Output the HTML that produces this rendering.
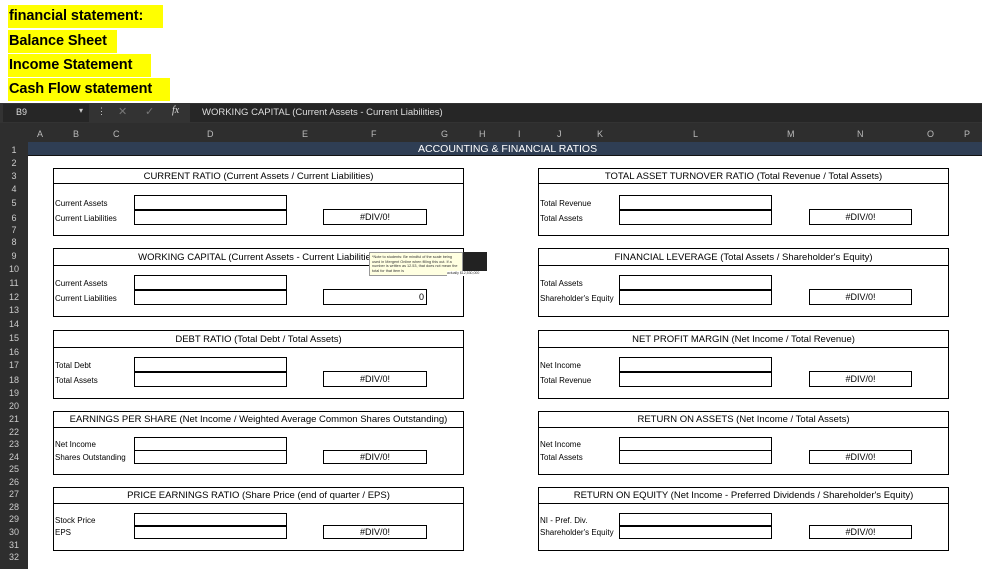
<!DOCTYPE html>
<html><head><meta charset="utf-8"><style>
*{margin:0;padding:0;box-sizing:border-box}
body{width:982px;height:569px;background:#fff;position:relative;overflow:hidden;font-family:"Liberation Sans",sans-serif}
.a{position:absolute}
.y{position:absolute;left:8px;background:#ffff00;font-weight:bold;font-size:14.5px;color:#000;line-height:23px;padding-left:1px;white-space:nowrap;letter-spacing:-0.1px}
.rn{position:absolute;left:0;width:28px;text-align:center;font-size:9px;color:#ccc;line-height:10px}
.ch{position:absolute;top:129px;font-size:9px;color:#bbb}
.box{position:absolute;border:1.5px solid #000;background:#fff}
.t{position:absolute;left:0;right:0;text-align:center;font-size:9.5px;color:#000;white-space:nowrap}
.hl{position:absolute;left:0;right:0;border-top:1px solid #000}
.lb{position:absolute;font-size:8px;color:#000;white-space:nowrap}
.in{position:absolute;border:1.5px solid #000}
.res{position:absolute;border:1.5px solid #000;font-size:9px;text-align:center;color:#000}
</style></head><body>
<div class="y" style="top:5px;width:155px">financial statement:</div>
<div class="y" style="top:30px;width:109px">Balance Sheet</div>
<div class="y" style="top:54px;width:143px">Income Statement</div>
<div class="y" style="top:78px;width:162px">Cash Flow statement</div>

<div class="a" style="top:103px;left:0;width:982px;height:20px;background:#333"></div>
<div class="a" style="top:104px;left:3px;width:86px;height:18px;background:#262626"></div>
<div class="a" style="top:107px;left:16px;font-size:9px;color:#ddd">B9</div>
<div class="a" style="top:106px;left:79px;font-size:8px;color:#ccc">▾</div>
<div class="a" style="top:106px;left:97px;font-size:9px;color:#ccc">⋮</div>
<div class="a" style="top:105px;left:118px;font-size:11px;color:#777">✕</div>
<div class="a" style="top:105px;left:145px;font-size:11px;color:#777">✓</div>
<div class="a" style="top:105px;left:172px;font-size:10px;color:#ddd;font-style:italic;font-family:'Liberation Serif',serif">fx</div>
<div class="a" style="top:104px;left:190px;width:792px;height:18px;background:#262626"></div>
<div class="a" style="top:107px;left:202px;font-size:9.5px;color:#ddd">WORKING CAPITAL (Current Assets - Current Liabilities)</div>

<div class="a" style="top:123px;left:0;width:982px;height:19px;background:#2e2e2e"></div>
<div class="a" style="top:142px;left:0;width:28px;height:427px;background:#2e2e2e"></div>
<div class="ch" style="left:37px">A</div><div class="ch" style="left:73px">B</div><div class="ch" style="left:113px">C</div><div class="ch" style="left:207px">D</div><div class="ch" style="left:302px">E</div><div class="ch" style="left:371px">F</div><div class="ch" style="left:441px">G</div><div class="ch" style="left:479px">H</div><div class="ch" style="left:518px">I</div><div class="ch" style="left:557px">J</div><div class="ch" style="left:597px">K</div><div class="ch" style="left:693px">L</div><div class="ch" style="left:787px">M</div><div class="ch" style="left:857px">N</div><div class="ch" style="left:927px">O</div><div class="ch" style="left:964px">P</div>

<div class="a" style="top:142px;left:28px;width:954px;height:14px;background:#2f3e54;border-bottom:1px solid #111"></div>
<div class="a" style="top:143px;left:418px;font-size:10.5px;color:#fff">ACCOUNTING &amp; FINANCIAL RATIOS</div>

<div class="rn" style="top:145px">1</div><div class="rn" style="top:158px">2</div><div class="rn" style="top:171px">3</div><div class="rn" style="top:184px">4</div><div class="rn" style="top:198px">5</div><div class="rn" style="top:213px">6</div><div class="rn" style="top:225px">7</div><div class="rn" style="top:237px">8</div><div class="rn" style="top:251px">9</div><div class="rn" style="top:264px">10</div><div class="rn" style="top:278px">11</div><div class="rn" style="top:292px">12</div><div class="rn" style="top:305px">13</div><div class="rn" style="top:319px">14</div><div class="rn" style="top:333px">15</div><div class="rn" style="top:347px">16</div><div class="rn" style="top:360px">17</div><div class="rn" style="top:375px">18</div><div class="rn" style="top:388px">19</div><div class="rn" style="top:401px">20</div><div class="rn" style="top:414px">21</div><div class="rn" style="top:427px">22</div><div class="rn" style="top:439px">23</div><div class="rn" style="top:452px">24</div><div class="rn" style="top:464px">25</div><div class="rn" style="top:477px">26</div><div class="rn" style="top:489px">27</div><div class="rn" style="top:502px">28</div><div class="rn" style="top:514px">29</div><div class="rn" style="top:527px">30</div><div class="rn" style="top:540px">31</div><div class="rn" style="top:552px">32</div>

<!-- LEFT -->
<div class="box" style="left:53px;top:168px;width:411px;height:68px"><div class="t" style="top:2px">CURRENT RATIO (Current Assets / Current Liabilities)</div><div class="hl" style="top:14px"></div></div>
<div class="lb" style="left:55px;top:199px">Current Assets</div><div class="lb" style="left:55px;top:214px">Current Liabilities</div>
<div class="in" style="left:134px;top:195px;width:153px;height:16px"></div><div class="in" style="left:134px;top:209px;width:153px;height:16px"></div>
<div class="res" style="left:323px;top:209px;width:104px;height:16px;line-height:14px">#DIV/0!</div>

<div class="box" style="left:53px;top:248px;width:411px;height:69px"><div class="t" style="top:3px">WORKING CAPITAL (Current Assets - Current Liabilities)</div><div class="hl" style="top:16px"></div></div>
<div class="lb" style="left:55px;top:279px">Current Assets</div><div class="lb" style="left:55px;top:294px">Current Liabilities</div>
<div class="in" style="left:134px;top:275px;width:153px;height:16px"></div><div class="in" style="left:134px;top:289px;width:153px;height:16px"></div>
<div class="res" style="left:323px;top:289px;width:104px;height:16px;line-height:14px;text-align:right;padding-right:2px">0</div>
<div class="a" style="left:369px;top:252px;width:118px;height:24px;background:#222"></div>
<div class="a" style="left:369px;top:252px;width:94px;height:24px;background:#ffffe1;border:1px solid #999;font-size:3.8px;line-height:4.5px;padding:2px;color:#333">*Note to students: Be mindful of the scale being used in Mergent Online when filling this out. If a number is written as 12.53, that does not mean the total for that item is</div>
<div class="a" style="left:447px;top:271px;width:40px;height:5px;background:#fff;font-size:3.5px;color:#333">actually $12,530,000</div>

<div class="box" style="left:53px;top:330px;width:411px;height:69px"><div class="t" style="top:3px">DEBT RATIO (Total Debt / Total Assets)</div><div class="hl" style="top:16px"></div></div>
<div class="lb" style="left:55px;top:361px">Total Debt</div><div class="lb" style="left:55px;top:376px">Total Assets</div>
<div class="in" style="left:134px;top:357px;width:153px;height:16px"></div><div class="in" style="left:134px;top:371px;width:153px;height:16px"></div>
<div class="res" style="left:323px;top:371px;width:104px;height:16px;line-height:14px">#DIV/0!</div>

<div class="box" style="left:53px;top:411px;width:411px;height:64px"><div class="t" style="top:2px">EARNINGS PER SHARE (Net Income / Weighted Average Common Shares Outstanding)</div><div class="hl" style="top:15px"></div></div>
<div class="lb" style="left:55px;top:440px">Net Income</div><div class="lb" style="left:55px;top:453px">Shares Outstanding</div>
<div class="in" style="left:134px;top:437px;width:153px;height:14px"></div><div class="in" style="left:134px;top:450px;width:153px;height:14px"></div>
<div class="res" style="left:323px;top:450px;width:104px;height:14px;line-height:12px">#DIV/0!</div>

<div class="box" style="left:53px;top:487px;width:411px;height:64px"><div class="t" style="top:2px">PRICE EARNINGS RATIO (Share Price (end of quarter / EPS)</div><div class="hl" style="top:15px"></div></div>
<div class="lb" style="left:55px;top:516px">Stock Price</div><div class="lb" style="left:55px;top:528px">EPS</div>
<div class="in" style="left:134px;top:513px;width:153px;height:14px"></div><div class="in" style="left:134px;top:525px;width:153px;height:14px"></div>
<div class="res" style="left:323px;top:525px;width:104px;height:14px;line-height:12px">#DIV/0!</div>

<!-- RIGHT -->
<div class="box" style="left:538px;top:168px;width:411px;height:68px"><div class="t" style="top:2px">TOTAL ASSET TURNOVER RATIO (Total Revenue / Total Assets)</div><div class="hl" style="top:14px"></div></div>
<div class="lb" style="left:540px;top:199px">Total Revenue</div><div class="lb" style="left:540px;top:214px">Total Assets</div>
<div class="in" style="left:619px;top:195px;width:153px;height:16px"></div><div class="in" style="left:619px;top:209px;width:153px;height:16px"></div>
<div class="res" style="left:809px;top:209px;width:103px;height:16px;line-height:14px">#DIV/0!</div>

<div class="box" style="left:538px;top:248px;width:411px;height:69px"><div class="t" style="top:3px">FINANCIAL LEVERAGE (Total Assets / Shareholder's Equity)</div><div class="hl" style="top:16px"></div></div>
<div class="lb" style="left:540px;top:279px">Total Assets</div><div class="lb" style="left:540px;top:294px">Shareholder's Equity</div>
<div class="in" style="left:619px;top:275px;width:153px;height:16px"></div><div class="in" style="left:619px;top:289px;width:153px;height:16px"></div>
<div class="res" style="left:809px;top:289px;width:103px;height:16px;line-height:14px">#DIV/0!</div>

<div class="box" style="left:538px;top:330px;width:411px;height:69px"><div class="t" style="top:3px">NET PROFIT MARGIN (Net Income / Total Revenue)</div><div class="hl" style="top:16px"></div></div>
<div class="lb" style="left:540px;top:361px">Net Income</div><div class="lb" style="left:540px;top:376px">Total Revenue</div>
<div class="in" style="left:619px;top:357px;width:153px;height:16px"></div><div class="in" style="left:619px;top:371px;width:153px;height:16px"></div>
<div class="res" style="left:809px;top:371px;width:103px;height:16px;line-height:14px">#DIV/0!</div>

<div class="box" style="left:538px;top:411px;width:411px;height:64px"><div class="t" style="top:2px">RETURN ON ASSETS (Net Income / Total Assets)</div><div class="hl" style="top:15px"></div></div>
<div class="lb" style="left:540px;top:440px">Net Income</div><div class="lb" style="left:540px;top:453px">Total Assets</div>
<div class="in" style="left:619px;top:437px;width:153px;height:14px"></div><div class="in" style="left:619px;top:450px;width:153px;height:14px"></div>
<div class="res" style="left:809px;top:450px;width:103px;height:14px;line-height:12px">#DIV/0!</div>

<div class="box" style="left:538px;top:487px;width:411px;height:64px"><div class="t" style="top:2px">RETURN ON EQUITY (Net Income - Preferred Dividends / Shareholder's Equity)</div><div class="hl" style="top:15px"></div></div>
<div class="lb" style="left:540px;top:516px">NI - Pref. Div.</div><div class="lb" style="left:540px;top:528px">Shareholder's Equity</div>
<div class="in" style="left:619px;top:513px;width:153px;height:14px"></div><div class="in" style="left:619px;top:525px;width:153px;height:14px"></div>
<div class="res" style="left:809px;top:525px;width:103px;height:14px;line-height:12px">#DIV/0!</div>
</body></html>
